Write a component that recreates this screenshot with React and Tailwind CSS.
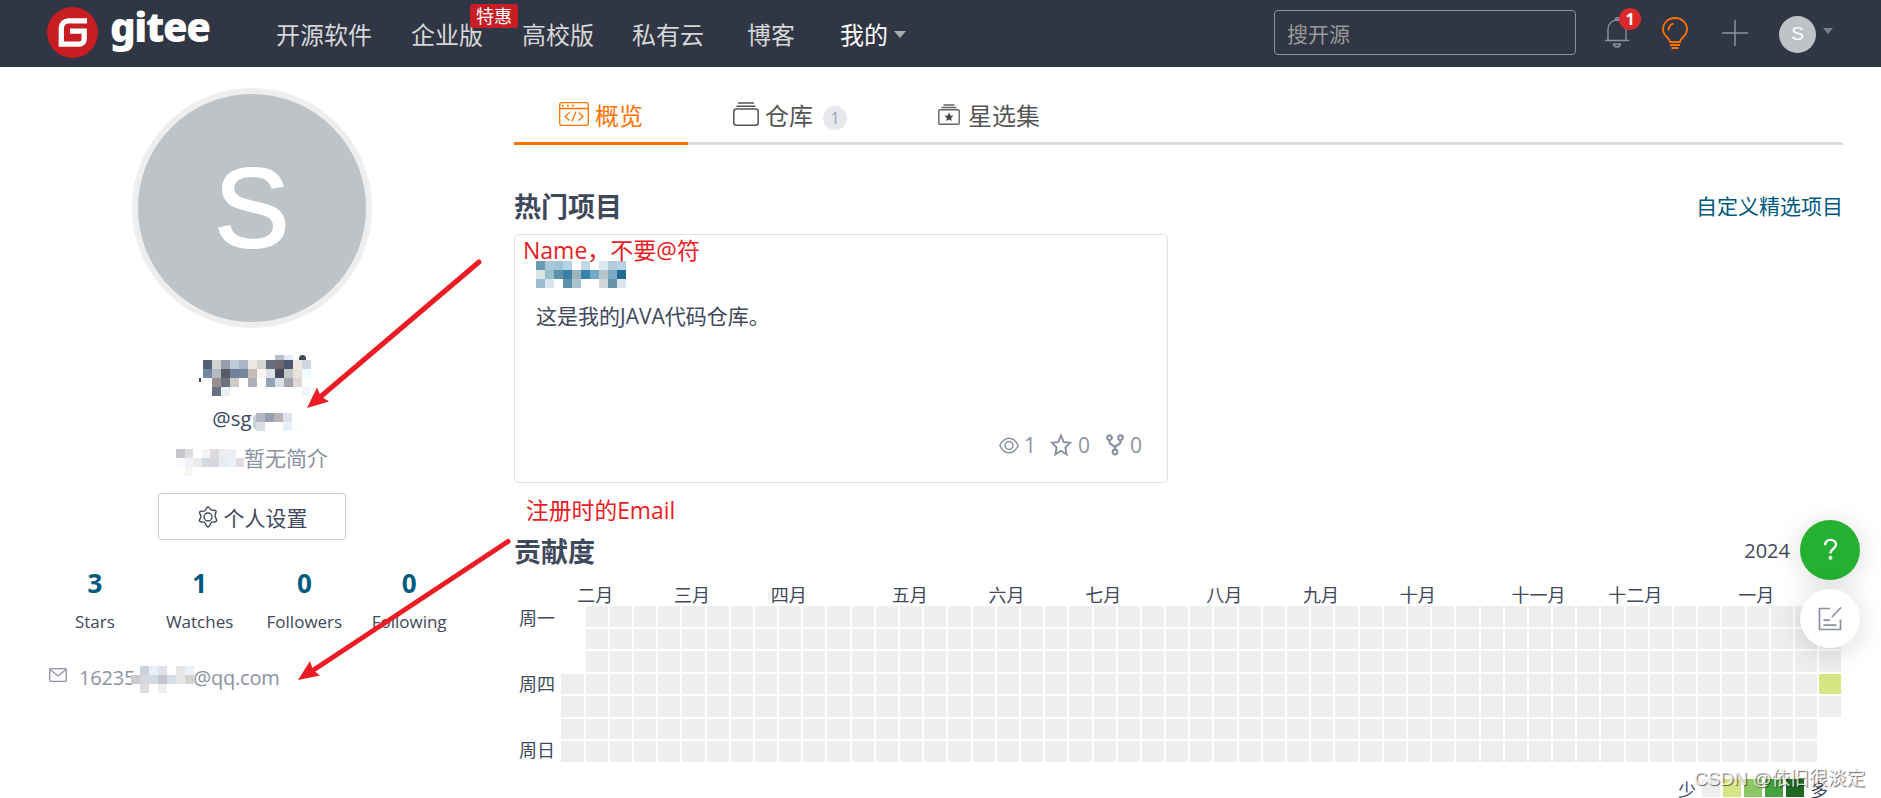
const NAV = [
    { label: "开源软件", left: "ml-[68px]" },
    { label: "企业版", left: "ml-[39px]", badge: "特惠" },
    { label: "高校版", left: "ml-[39px]" },
    { label: "私有云", left: "ml-[38px]" },
    { label: "博客", left: "ml-[43px]" },
];

const STATS = [
    { value: 3, label: "Stars" },
    { value: 1, label: "Watches" },
    { value: 0, label: "Followers" },
    { value: 0, label: "Following" },
];

// Month label -> week column it is centered on
const MONTHS = [
    ["二月", 1], ["三月", 5], ["四月", 9], ["五月", 14],
    ["六月", 18], ["七月", 22], ["八月", 27], ["九月", 31],
    ["十月", 35], ["十一月", 40], ["十二月", 44], ["一月", 49],
];

const WEEKS = 53;

// Censored pieces of text, 9px blocks
const nameBlocks = [
    ["#535f76", "#d2d2d0", "#979eab", "#bfcad8", "#a9b6c6", "#ebe7e4", "#d3d5cf", "#676d7e", "#6e676b", "#4b586f", "#f1e8e2", "#cbd7e2"],
    ["#74879f", "#b2bac3", "#585a68", "#6f819b", "#76889f", "#c6bdba", "#f8f5f2", "#dce0e7", "#46485b", "#c5c7cb", "#e9e2dd", "#effffd"],
    ["", "#978f91", "#6e717e", "#d1cbc8", "", "#afb0b7", "", "#95a5b8", "#dcdde3", "#a1a7b0", "#e0d8d5", ""],
    ["", "#6a6f7e", "#eaeff4", "", "", "", "", "", "", "", "", "#f1f6fb"],
];
const loginBlocks = [
    ["#b1b6bf", "#989fb1", "#b9b3b8", "#dfe2eb", ""],
    ["#dadde1", "", "", "#e6effa", "#fafffe"],
];
const bioBlocks = [
    ["#c7c6cd", "#e0dde1", "", "#f4f3f6", "#dfdbdd", "#ececf1", "#ecedf3", ""],
    ["#fafafa", "#eff2f8", "#e9eceb", "#d5d9df", "#d6d9e0", "#e9ebf3", "#eaf0f7", "#dfdde0"],
    ["", "#f8f6f5", "", "", "", "", "#fcfdff", ""],
];
const mailBlocks = [
    ["", "#ccd2dc", "#e6f0fa", "#e0e2e6", "", "#e6e6e6", "#eef0f7"],
    ["#cbcad3", "#d6d7df", "#d2dae5", "#c5c5d1", "#d6dde9", "#e8e8e7", "#d3d3d3"],
    ["", "#dcdce2", "", "#eeeeef", "", "", ""],
];
const repoBlocks = [
    ["#699bb1", "#a8c8da", "#9fc4d5", "#b1d3e5", "", "#c3dae4", "", "#d9e8f0", "#b1cbd8", "#b5d3e3"],
    ["#dce6e7", "#97c0c9", "#5c91a9", "#377fa6", "#a0b3bc", "#3983ab", "#71aac8", "#b9c5cd", "#79a8c2", "#216b93"],
    ["#9bbcd0", "#d7e3ed", "", "#5d91a9", "#a9c3d1", "", "", "#ced8da", "#6793a9", "#dce6ee"],
];

const Mosaic = ({ rows, className = "" }) => (
    <div className={`flex flex-col ${className}`}>
        {rows.map((row, r) => (
            <div key={r} className="flex">
                {row.map((color, c) => (
                    <span key={c} className="h-[9px] w-[9px]" style={{ backgroundColor: color || "transparent" }} />
                ))}
            </div>
        ))}
    </div>
);

const Logo = () => (
    <div className="flex h-full items-center">
        <svg className="-mt-[2px] h-[51px] w-[51px]" viewBox="0 0 51 51">
            <circle cx="25.5" cy="25.5" r="25.5" fill="#c71d23" />
            <path d="M40 13.8H21.500a7.200 7.200 0 0 0-7.200 7.200v16.200h17.900a5 5 0 0 0 5-5V24.200H23" fill="none" stroke="#fff" strokeWidth="5.300" />
        </svg>
        <span className="-mt-[14px] ml-[12px] w-[98px] font-['Noto_Sans'] text-[40px] font-black leading-none tracking-[-1.4px] text-white">gitee</span>
    </div>
);

const BellIcon = () => (
    <svg className="h-8 w-6" viewBox="0 0 24 32" fill="none" stroke="#8c92a4" strokeWidth="1.4">
        <path d="M0 24.500h24M3 24V13C3 8 7 4 12 4s9 4 9 9v11" />
        <circle cx="12" cy="3" r="1.500" />
        <path d="M8.600 28h6.800c-.4 2-1.800 3-3.400 3s-3-1-3.400-3z" />
    </svg>
);

const BulbIcon = () => (
    <svg className="h-8 w-[26px]" viewBox="0 0 26 32" fill="none" stroke="#fe7300" strokeWidth="1.800">
        <path d="M8 25c0-4.500-7-5.500-7-12.500C1 6 6 1 13 1s12 5 12 11.500c0 7-7 8-7 12.500z" strokeLinejoin="round" />
        <path d="M6.500 13.500c0-3.500 1.800-6 5-6.800M8 28h10M9.500 31h7" />
    </svg>
);

const CodeIcon = () => (
    <svg className="h-6 w-[30px]" viewBox="0 0 30 24" fill="none" stroke="#fe7300" strokeWidth="1.300">
        <rect x=".7" y=".7" width="28.600" height="22.600" rx="2" />
        <path d="M1 6.500h28M10.500 10.500l-4.500 4 4.500 4M19.500 10.500l4.500 4-4.500 4M17 9.500l-4 10" />
        <path d="M3 3.700h1.800M8 3.700h1.800M13 3.700h1.800" strokeWidth="1.800" />
    </svg>
);

const ReposIcon = () => (
    <svg className="h-6 w-[26px]" viewBox="0 0 26 24" fill="none" stroke="#555" strokeWidth="1.500">
        <rect x=".8" y="7" width="24.400" height="16.200" rx="2.500" />
        <path d="M5 1h16M3.500 4.200h19" />
    </svg>
);

const StarSetIcon = () => (
    <svg className="h-[21px] w-[22px]" viewBox="0 0 22 21" fill="none" stroke="#666" strokeWidth="1.400">
        <rect x=".8" y="5.800" width="20.400" height="14.400" rx="1" />
        <path d="M5.500 1h11M3.500 3.500h15" />
        <path d="M11 8.500l1.300 3 3.200.3-2.400 2.100.7 3.200-2.800-1.700-2.800 1.700.7-3.200-2.400-2.100 3.200-.3z" fill="#444" stroke="none" />
    </svg>
);

const GearIcon = () => (
    <svg className="h-[22px] w-[22px]" viewBox="0 0 22 22" fill="none" stroke="#40485b" strokeWidth="1.400" strokeLinejoin="round">
        <path d="M11 1c1.500 0 2 2.300 3.300 3s3.700-.4 4.600.8-.9 3-.9 4.700 2.300 4.200 1.400 5.700-3.400.2-4.800 1S12.700 21 11 21s-2.200-4-3.600-4.800-3.900.5-4.800-1S4 12.200 4 10.500 1.800 7.300 2.700 5.800s3.400 0 4.800-.8S9.500 1 11 1z" />
        <circle cx="11" cy="11" r="4" />
    </svg>
);

const EyeIcon = () => (
    <svg className="h-[17px] w-[20px]" viewBox="0 0 20 17" fill="none" stroke="#8c92a4" strokeWidth="1.500">
        <path d="M.8 8.500C3 3.800 6 1.200 10 1.200s7 2.600 9.200 7.300C17 13.200 14 15.800 10 15.800S3 13.200.8 8.500z" />
        <circle cx="10" cy="8.500" r="3.900" />
    </svg>
);

const StarIcon = () => (
    <svg className="h-[24px] w-[22px]" viewBox="0 0 22 24" fill="none" stroke="#8c92a4" strokeWidth="1.900">
        <path d="M11 2.500l2.700 6.500 6.500.7-4.900 4.800 1.400 6.900L11 17.800l-5.700 3.600 1.400-6.900L1.800 9.700l6.500-.7z" />
    </svg>
);

const ForkIcon = () => (
    <svg className="h-[22px] w-[18px]" viewBox="0 0 18 22" fill="none" stroke="#8c92a4" strokeWidth="2.200">
        <circle cx="3.500" cy="3.700" r="2.300" />
        <circle cx="14.500" cy="3.700" r="2.300" />
        <circle cx="9" cy="18" r="2.300" />
        <path d="M3.500 6v2c0 3.400 5.500 2.500 5.500 6v1.700M14.500 6v2c0 3.400-5.500 2.500-5.500 6" />
    </svg>
);

const Header = () => (
    <header className="flex h-[67px] items-center bg-[#303643] pl-[47px] pr-[48px]">
        <Logo />
        {NAV.map((item) => (
            <a key={item.label} className={`relative mt-[3px] whitespace-nowrap text-[24px] leading-9 text-[#d6d7d9] ${item.left}`}>
                {item.label}
                {item.badge && (
                    <span className="absolute -top-[13px] left-[59px] h-6 w-12 rounded-[3px] bg-[#c71d23] text-center text-[18px] leading-6 text-white">
                        {item.badge}
                    </span>
                )}
            </a>
        ))}
        <div className="ml-[45px] mt-[3px] flex items-center gap-[6px] text-[24px] leading-9 text-white">
            我的
            <span className="-mt-[2px] border-x-[6.5px] border-t-[7px] border-x-transparent border-t-[#a9acb2]" />
        </div>
        <div className="ml-auto mt-[-2px] flex h-[45px] w-[302px] items-center rounded-[4px] border border-[#8c92a4] pl-3 pt-[4px] text-[21px] text-[#9b9b9b]">
            搜开源
        </div>
        <div className="relative ml-[29px] mt-[-3px]">
            <BellIcon />
            <span className="absolute -top-[8px] left-[14px] h-[22px] w-[22px] rounded-full bg-[#db2828] text-center text-[16px] font-bold leading-[22px] text-white">1</span>
        </div>
        <div className="ml-[33px] mt-[-2px]"><BulbIcon /></div>
        <svg className="ml-[34px] mt-[-2px] h-[26px] w-[26px]" viewBox="0 0 26 26" stroke="#8c92a4" strokeWidth="1.500">
            <path d="M0 13h26M13 0v26" />
        </svg>
        <div className="ml-[31px] mt-[1px] flex h-[37px] w-[37px] items-center justify-center rounded-full bg-[#bdc3c7] font-['Liberation_Sans'] text-[19px] text-white">S</div>
        <span className="ml-[7px] mt-[-6px] border-x-[5.5px] border-t-[6px] border-x-transparent border-t-[#777f90]" />
    </header>
);

const Profile = () => (
    <aside className="flex w-[420px] shrink-0 flex-col items-center pt-[21px]">
        <div className="flex h-[240px] w-[240px] items-center justify-center rounded-full border-[6px] border-[#eee] bg-[#bdc3c7] font-['Liberation_Sans'] text-[113px] leading-none text-white [-webkit-text-stroke:2px_white]">
            S
        </div>
        <div className="relative ml-[10px] mt-[27px]">
            <div className="flex h-[5px] pl-[72px]">
                <span className="w-[9px] bg-[#b6bfcd]" />
                <span className="w-[9px] bg-[#e3ebf5]" />
                <span className="ml-[6px] w-[7px] rounded-t-full bg-[#40485b]" />
            </div>
            <Mosaic rows={nameBlocks} />
            <span className="absolute -left-[4px] top-[23px] h-[4px] w-[2px] bg-[#40485b]" />
        </div>
        <div className="mt-[6px] flex h-[32px] items-center pl-[9px] text-[20.5px] text-[#40485b]">
            @sg
            <span className="ml-[1px] mt-[7px] h-[14px] w-[3px] rounded-l-full bg-[#c3d3d8]" />
            <Mosaic rows={loginBlocks} className="mt-[8px]" />
        </div>
        <div className="mt-[8px] flex h-[34px] items-center text-[21px] text-[#8c92a4]">
            <Mosaic rows={bioBlocks} className="mt-[7px] w-[68px]" />
            <span>暂无简介</span>
        </div>
        <div className="mt-[17px] flex h-[47px] w-[188px] items-center justify-center rounded-[3px] border border-[#ccc] text-[21px] text-[#40485b]">
            <GearIcon />
            <span className="ml-[5px] mt-[4px]">个人设置</span>
        </div>
        <div className="mt-[24px] grid w-[419px] grid-cols-4 text-center text-[#40485b]">
            {STATS.map((stat) => (
                <div key={stat.label}>
                    <div className="text-[26px] font-bold leading-[38px] text-[#005980]">{stat.value}</div>
                    <div className="mt-[5px] text-[17px] leading-[30px]">{stat.label}</div>
                </div>
            ))}
        </div>
        <div className="mt-[24px] flex h-[34px] w-[412px] items-center pl-[3px] text-[20px] tracking-[-0.2px] text-[#8c92a4]">
            <svg className="-mt-[6px] mr-[12px] h-[14px] w-[18px]" viewBox="0 0 18 14" fill="none" stroke="#8c92a4" strokeWidth="1.300">
                <rect x=".7" y=".7" width="16.600" height="12.600" rx="1" />
                <path d="M1 1.500l8 6.500 8-6.500" />
            </svg>
            16235
            <Mosaic rows={mailBlocks} className="-ml-[4px] mt-[2px]" />
            <span className="-ml-[1px]">@qq.com</span>
        </div>
    </aside>
);

const Tabs = () => (
    <nav className="flex h-[78px] border-b-[3px] border-[#ddd] text-[24px] text-[#555]">
        <a className="-mb-[3px] flex w-[174px] items-center justify-center border-b-[3px] border-[#fe7300] pt-[19px] text-[#fe7300]">
            <CodeIcon />
            <span className="ml-[6px] mt-[4px]">概览</span>
        </a>
        <a className="ml-[45px] flex items-center pt-[19px]">
            <ReposIcon />
            <span className="ml-[6px] mt-[4px]">仓库</span>
            <span className="ml-[10px] mt-[7px] h-6 w-6 rounded-full bg-[#e7e8eb] text-center text-[17px] leading-6 text-[#9aa7c3]">1</span>
        </a>
        <a className="ml-[91px] flex items-center pt-[19px]">
            <StarSetIcon />
            <span className="ml-[8px] mt-[4px]">星选集</span>
        </a>
    </nav>
);

const RepoCard = () => (
    <div className="relative mt-[9px] flex h-[249px] w-[654px] flex-col rounded-[5px] border border-[#dce3e8] px-[21px] pt-[26px] text-[21px] text-[#40485b]">
        <span className="absolute -top-[1px] left-[8px] whitespace-nowrap text-[23px] leading-8 text-[#ed1c24]">Name，不要@符</span>
        <Mosaic rows={repoBlocks} />
        <p className="mt-[12px] leading-8">这是我的JAVA代码仓库。</p>
        <div className="mb-[21px] mr-[4px] mt-auto flex items-center justify-end leading-8 text-[#8c92a4]">
            <EyeIcon /><span className="ml-[5px]">1</span>
            <span className="ml-[14px]"><StarIcon /></span><span className="ml-[6px]">0</span>
            <span className="ml-[16px]"><ForkIcon /></span><span className="ml-[6px]">0</span>
        </div>
    </div>
);

const Contributions = () => {
    const cells = [];
    for (let day = 0; day < 7; day++) {
        for (let week = 0; week < WEEKS; week++) {
            const empty = (week === 0 && day < 3) || (week === WEEKS - 1 && day > 4);
            const active = week === WEEKS - 1 && day === 3;
            cells.push(
                <span key={`${day}-${week}`} className={empty ? "" : active ? "bg-[#d6e685]" : "bg-[#eee]"} />
            );
        }
    }

    return (
        <section className="text-[18px] text-[#40485b]">
            <div className="grid h-[22px] grid-cols-[repeat(53,22.2px)] gap-x-[2px] pl-[46px]">
                {MONTHS.map(([name, week]) => (
                    <span
                        key={name}
                        className="row-start-1 flex justify-center whitespace-nowrap leading-[22px]"
                        style={{ gridColumnStart: week + 1 }}
                    >
                        {name}
                    </span>
                ))}
            </div>
            <div className="flex">
                <div className="flex h-[156px] w-[47.4px] flex-col justify-between pl-[5px] leading-[24px]">
                    <span>周一</span>
                    <span>周四</span>
                    <span>周日</span>
                </div>
                <div className="grid h-[156px] grid-cols-[repeat(53,22.2px)] grid-rows-7 gap-[2px]">{cells}</div>
            </div>
            <div className="mt-[14px] flex h-6 items-center justify-end gap-[3px] pr-[15px] leading-[24px]">
                <span className="mr-[3px] mt-[4px]">少</span>
                <span className="h-[18px] w-[18px] bg-[#eee]" />
                <span className="h-[18px] w-[18px] bg-[#d6e685]" />
                <span className="h-[18px] w-[18px] bg-[#8cc665]" />
                <span className="h-[18px] w-[18px] bg-[#44a340]" />
                <span className="h-[18px] w-[18px] bg-[#1e6823]" />
                <span className="ml-[3px] mt-[4px]">多</span>
            </div>
        </section>
    );
};

const FloatingButtons = () => (
    <div className="absolute left-[1800px] top-[520px] flex flex-col gap-[9px]">
        <div className="flex h-[60px] w-[60px] items-center justify-center rounded-full bg-[#24b132] shadow-[0_4px_28px_rgba(0,0,0,0.15)]">
            <svg className="-mt-[2px] h-[22px] w-[15px]" viewBox="0 0 16 24" fill="none" stroke="#fff" strokeWidth="2.600">
                <path d="M2 8C2 4.500 4.500 2 8 2s6 2.200 6 5.400C14 11.500 8 11.500 8 17" />
                <circle cx="8" cy="21.500" r="2.100" fill="#fff" stroke="none" />
            </svg>
        </div>
        <div className="flex h-[59px] w-[60px] items-center justify-center rounded-full bg-white shadow-[0_4px_28px_rgba(0,0,0,0.15)]">
            <svg className="h-[24px] w-[24px]" viewBox="0 0 24 24" fill="none" stroke="#8c92a4" strokeWidth="1.700">
                <path d="M12 1.500H1.500v21h21V12.500M23 .5L14 10M5.500 13.200h6.500M5.500 18.200h13" />
            </svg>
        </div>
    </div>
);

const Arrows = () => (
    <svg className="pointer-events-none absolute left-0 top-0 h-[798px] w-[600px]" viewBox="0 0 600 798" stroke="#ed1c24" fill="#ed1c24">
        <path d="M479 262L319 398" strokeWidth="5" strokeLinecap="round" />
        <path d="M307 408l10-20.500 3.500 8.500 8.500 5.500z" stroke="none" />
        <path d="M508 541.500L312 671" strokeWidth="5" strokeLinecap="round" />
        <path d="M298 680l12-19 3 9 7 5.500z" stroke="none" />
    </svg>
);

const App = () => {
    return (
        <div className="relative h-[798px] w-[1881px] overflow-hidden bg-white font-['Open_Sans','Noto_Sans_CJK_SC',sans-serif]">
            <Header />
            <div className="flex pl-[42px]">
                <Profile />
                <main className="ml-[52px] w-[1329px] shrink-0">
                    <Tabs />
                    <div className="mt-[42px] flex h-[38px] items-center justify-between">
                        <h2 className="text-[27px] font-bold leading-none text-[#40485b]">热门项目</h2>
                        <a className="mt-[2px] text-[21px] text-[#005980]">自定义精选项目</a>
                    </div>
                    <RepoCard />
                    <p className="mt-[10px] pl-[12px] text-[22.8px] leading-9 text-[#ed1c24]">注册时的Email</p>
                    <div className="mt-[3px] flex h-[38px] items-center justify-between text-[#40485b]">
                        <h2 className="text-[27px] font-bold leading-none">贡献度</h2>
                        <span className="mr-[53px] text-[20px]">2024</span>
                    </div>
                    <div className="mt-[14px]"><Contributions /></div>
                </main>
            </div>
            <FloatingButtons />
            <Arrows />
            <div className="absolute left-[1694px] top-[765px] whitespace-nowrap font-['Liberation_Sans','Noto_Sans_CJK_SC',sans-serif] text-[18.8px] leading-7 text-white/80 [text-shadow:1px_1px_1px_rgba(0,0,0,0.6)]">
                CSDN @依旧很淡定
            </div>
        </div>
    );
};

export default App;
